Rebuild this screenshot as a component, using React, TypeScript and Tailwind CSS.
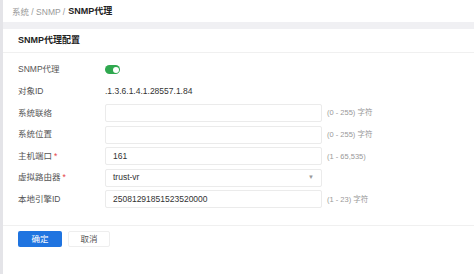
import React from 'react';

const font = { fontFamily: '"Liberation Sans", "Noto Sans CJK SC", sans-serif' };

const Row: React.FC<{ label: string; required?: boolean; children: React.ReactNode; hint?: string }> = ({ label, required, children, hint }) => (
  <div className="flex items-center h-[21.6px]">
    <div className="w-[87px] shrink-0 text-[8.5px] text-[#555]">
      {label}
      {required && <span className="text-[#e54545] ml-[2px]">*</span>}
    </div>
    <div className="w-[217px] shrink-0">{children}</div>
    {hint && <div className="ml-[5px] text-[7.5px] text-[#999]">{hint}</div>}
  </div>
);

const Input: React.FC<{ value?: string }> = ({ value }) => (
  <div className="h-[18px] border border-[#ebebeb] rounded-[2px] bg-white flex items-center px-[7px] text-[8.5px] text-[#333]">
    {value}
  </div>
);

export default function App() {
  return (
    <div className="w-[474px] h-[274px] bg-white flex overflow-hidden" style={font}>
      <div className="w-[3px] bg-[#e4e4e8] shrink-0" />
      <div className="flex-1 flex flex-col">
        <div className="h-[22px] flex items-center pt-[2px] px-[9px] text-[8.5px] text-[#999]">
          系统 / SNMP / <span className="text-[#222] font-bold ml-[3px] text-[9px]">SNMP代理</span>
        </div>
        <div className="h-[7px] bg-[#f0f0f3]" />
        <div className="flex-1 bg-white">
          <div className="h-[24px] flex items-center pt-[1px] px-[15px] text-[9px] font-bold text-[#222] border-b border-[#f0f0f0]">
            SNMP代理配置
          </div>
          <div className="px-[15px] pt-[6px] pb-[15px] border-b border-[#f0f0f0]">
            <Row label="SNMP代理">
              <div className="w-[15px] h-[9px] rounded-full bg-[#2fa84f] relative">
                <div className="absolute right-[1.5px] top-[1.5px] w-[6px] h-[6px] rounded-full bg-white" />
              </div>
            </Row>
            <Row label="对象ID">
              <div className="text-[8.5px] text-[#333]">.1.3.6.1.4.1.28557.1.84</div>
            </Row>
            <Row label="系统联络" hint="(0 - 255) 字符">
              <Input />
            </Row>
            <Row label="系统位置" hint="(0 - 255) 字符">
              <Input />
            </Row>
            <Row label="主机端口" required hint="(1 - 65,535)">
              <Input value="161" />
            </Row>
            <Row label="虚拟路由器" required>
              <div className="h-[18px] border border-[#ebebeb] rounded-[2px] bg-white flex items-center justify-between px-[7px] text-[8.5px] text-[#333]">
                <span>trust-vr</span>
                <span className="text-[6px] text-[#999]">▼</span>
              </div>
            </Row>
            <Row label="本地引擎ID" hint="(1 - 23) 字符">
              <Input value="25081291851523520000" />
            </Row>
          </div>
          <div className="flex gap-[6px] px-[15px] pt-[5px]">
            <button className="w-[44px] h-[16px] bg-[#1f74e0] text-white text-[8.5px] rounded-[2px]">确定</button>
            <button className="w-[42px] h-[16px] bg-white border border-[#eee] text-[#555] text-[8.5px] rounded-[2px]">取消</button>
          </div>
        </div>
      </div>
    </div>
  );
}
